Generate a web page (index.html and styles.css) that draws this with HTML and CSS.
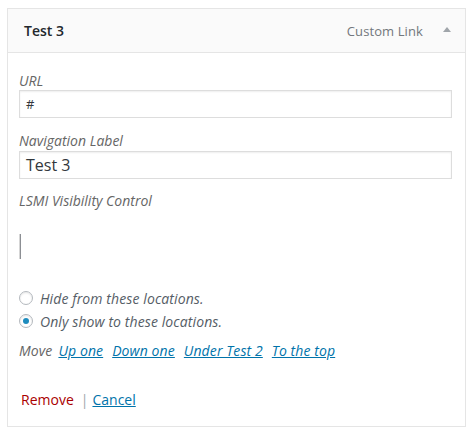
FILE: index.html
```html
<!DOCTYPE html>
<html>
<head>
<meta charset="utf-8">
<link rel="stylesheet" href="styles.css">
</head>
<body>
<div class="panel">
  <div class="panel-head">
    <span class="title">Test 3</span>
    <span class="type">Custom Link</span>
    <span class="arrow"></span>
  </div>
  <div class="panel-body">
    <label class="lbl lbl-url">URL</label>
    <div class="input input-small">#</div>
    <label class="lbl lbl-nav">Navigation Label</label>
    <div class="input input-large">Test 3</div>
    <label class="lbl lbl-lsmi">LSMI Visibility Control</label>
    <div class="caret"></div>
    <div class="radios">
      <div class="radio-row"><span class="radio"></span><span class="rtext">Hide from these locations.</span></div>
      <div class="radio-row"><span class="radio checked"></span><span class="rtext">Only show to these locations.</span></div>
    </div>
    <div class="move">
      <span class="move-lbl">Move</span>
      <a class="mlink">Up one</a>
      <a class="mlink">Down one</a>
      <a class="mlink">Under Test 2</a>
      <a class="mlink">To the top</a>
    </div>
    <div class="actions">
      <a class="remove">Remove</a>
      <span class="sep">|</span>
      <a class="cancel">Cancel</a>
    </div>
  </div>
</div>
</body>
</html>
```

FILE: styles.css
```css
html, body {
  margin: 0;
  padding: 0;
  background: #ffffff;
}
body {
  font-family: "Open Sans", "Noto Sans", sans-serif;
  color: #23282d;
}
.panel {
  margin: 8px 0 0 7px;
  width: 457px;
  border: 1px solid #e5e5e5;
  background: #fff;
}
.panel-head {
  display: flex;
  align-items: center;
  height: 44px;
  background: #fafafa;
  border-bottom: 1px solid #e5e5e5;
  padding: 0 14px 0 16px;
  box-sizing: border-box;
}
.title {
  font-size: 14px;
  font-weight: 600;
  color: #23282d;
  flex: 1;
  margin-top: -1px;
}
.type {
  font-size: 13px;
  letter-spacing: 0.1px;
  color: #72777c;
  margin-top: 1px;
}
.arrow {
  width: 0;
  height: 0;
  border-left: 4px solid transparent;
  border-right: 4px solid transparent;
  border-bottom: 5px solid #a0a5aa;
  margin-left: 20px;
  margin-top: -3px;
}
.panel-body {
  padding: 0 13px 0 11px;
  display: flex;
  flex-direction: column;
  align-items: flex-start;
}
.lbl {
  display: block;
  font-size: 14px;
  font-style: italic;
  line-height: 20px;
  color: #666;
}
.lbl-url { margin-top: 18px; }
.lbl-nav { margin-top: 13px; }
.lbl-lsmi { margin-top: 12px; }
.input {
  align-self: stretch;
  box-sizing: border-box;
  height: 28px;
  border: 1px solid #ddd;
  box-shadow: inset 0 1px 2px rgba(0,0,0,0.07);
  padding: 0 6px;
  color: #32373c;
  display: flex;
  align-items: center;
}
.input-small { font-size: 13px; margin-top: -1px; }
.input-large { font-size: 16px; margin-top: 0; }
.caret {
  width: 1px;
  height: 25px;
  background: #8c8f94;
  margin-top: 23px;
  margin-left: 0;
  border-left: 1px solid #d5d5d5;
}
.radios {
  margin-top: 28px;
  display: flex;
  flex-direction: column;
  gap: 1px;
}
.radio-row {
  display: flex;
  align-items: center;
  height: 22px;
}
.radio {
  width: 14px;
  height: 14px;
  box-sizing: border-box;
  border: 1px solid #b4b9be;
  border-radius: 50%;
  background: #fff;
  box-shadow: inset 0 1px 2px rgba(0,0,0,0.1);
  display: flex;
  align-items: center;
  justify-content: center;
  margin-right: 7px;
}
.radio.checked::before {
  content: "";
  width: 6px;
  height: 6px;
  border-radius: 50%;
  background: #1e8cbe;
}
.rtext {
  font-size: 14px;
  font-style: italic;
  letter-spacing: 0.1px;
  color: #555d66;
}
.move {
  margin-top: 9px;
  font-size: 14px;
  font-style: italic;
  letter-spacing: 0.1px;
  line-height: 20px;
  display: flex;
  gap: 9px;
}
.move-lbl { color: #666; margin-right: -3px; }
.mlink {
  color: #0073aa;
  text-decoration: underline;
}
.actions {
  margin-top: 29px;
  font-size: 14px;
  line-height: 20px;
  margin-left: 2px;
  margin-bottom: 16px;
  display: flex;
}
.remove { color: #a00; }
.sep { color: #a0a5aa; margin: 0 4px 0 7px; }
.cancel {
  color: #0073aa;
  text-decoration: underline;
}
```
